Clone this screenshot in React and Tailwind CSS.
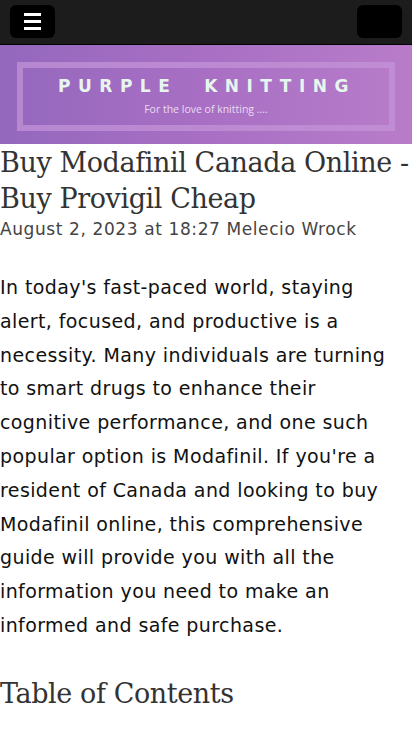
import React from 'react';

const serif = { fontFamily: '"DejaVu Serif", Georgia, serif' };

const Header = () => (
  <div className="h-[45px] bg-[#1c1c1c] border-b border-black flex items-start justify-between px-[10px] pt-[5px]">
    <button className="w-[45px] h-[33px] rounded-[6px] bg-black flex flex-col items-center justify-center gap-[4px]">
      <span className="block w-[17px] h-[3px] bg-white" />
      <span className="block w-[17px] h-[3px] bg-white" />
      <span className="block w-[17px] h-[3px] bg-white" />
    </button>
    <button className="w-[45px] h-[33px] rounded-[6px] bg-black" />
  </div>
);

const Banner = () => (
  <div className="h-[99px] bg-gradient-to-r from-[#9468bd] via-[#a86fc4] to-[#b87cc9] pt-[17px] px-[17px]">
    <div className="h-[69px] border-[6px] border-[#c496d8]/70 flex flex-col items-center justify-center">
      <div
        className="text-[#e6f6ee] text-[17px] font-bold tracking-[7.5px] pl-[2px] leading-none"
        style={{ fontFamily: '"DejaVu Sans", "Open Sans", sans-serif' }}
      >
        PURPLE&nbsp; KNITTING
      </div>
      <div
        className="text-[#eadcf0] text-[10.5px] mt-[9px] leading-none"
        style={{ fontFamily: '"Open Sans", sans-serif' }}
      >
        For the love of knitting ....
      </div>
    </div>
  </div>
);

const lines = [
  "In today's fast-paced world, staying",
  'alert, focused, and productive is a',
  'necessity. Many individuals are turning',
  'to smart drugs to enhance their',
  'cognitive performance, and one such',
  "popular option is Modafinil. If you're a",
  'resident of Canada and looking to buy',
  'Modafinil online, this comprehensive',
  'guide will provide you with all the',
  'information you need to make an',
  'informed and safe purchase.',
];

export default function App() {
  return (
    <div className="bg-white min-h-[732px] overflow-hidden" style={{ fontFamily: '"DejaVu Sans", Verdana, sans-serif' }}>
      <Header />
      <Banner />
      <div>
        <h1 className="text-[#333] text-[27px] leading-[36px] mt-[1px] tracking-[-0.4px] whitespace-nowrap" style={serif}>
          Buy Modafinil Canada Online -<br />
          Buy Provigil Cheap
        </h1>
        <div className="text-[#444] text-[17px] leading-[22px] mt-[1px] tracking-[0.6px]">
          August 2, 2023 at 18:27 Melecio Wrock
        </div>
        <p className="text-[#111] text-[19px] leading-[33.8px] mt-[31px] tracking-[0.4px] whitespace-nowrap">
          {lines.map((l, i) => (
            <React.Fragment key={i}>
              {l}
              <br />
            </React.Fragment>
          ))}
        </p>
        <h2 className="text-[#333] text-[27px] leading-[36px] mt-[33px] tracking-[-0.4px]" style={serif}>
          Table of Contents
        </h2>
      </div>
    </div>
  );
}
